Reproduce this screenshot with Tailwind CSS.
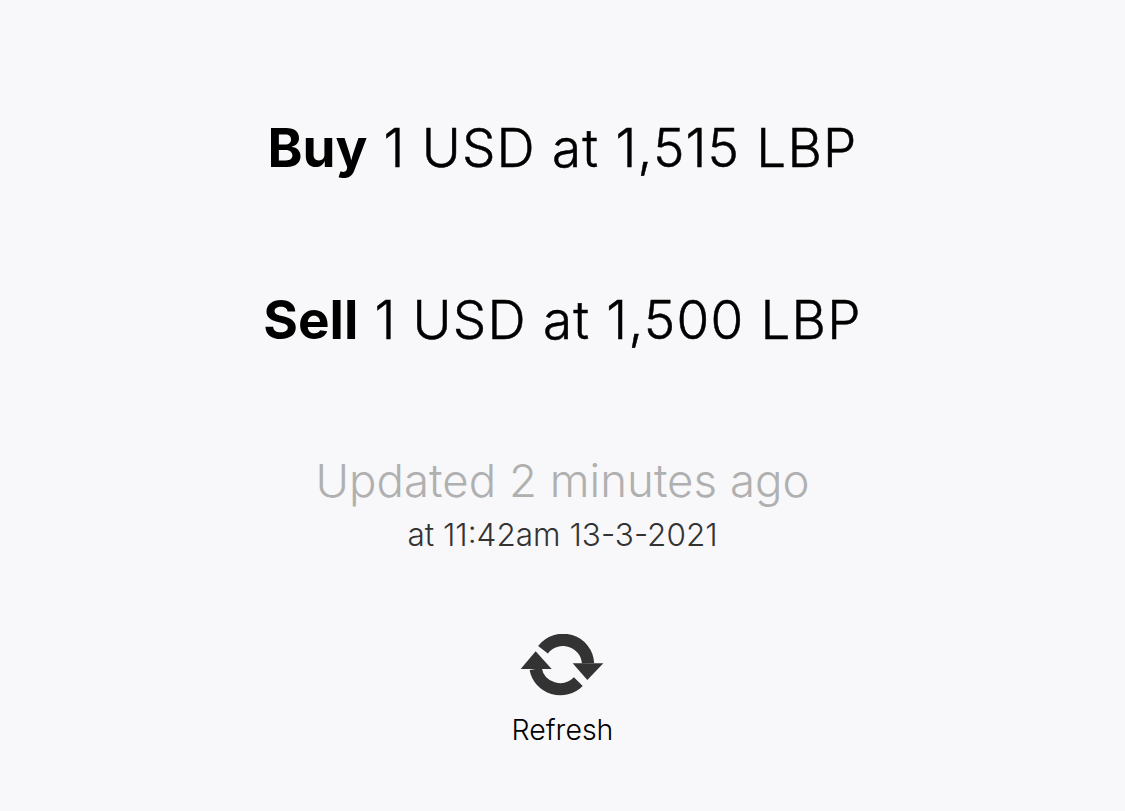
<!DOCTYPE html>
<html lang="en">
<head>
    <meta charset="UTF-8">
    <title>USD to LBP</title>
    <script src="https://cdn.jsdelivr.net/npm/@tailwindcss/browser@4"></script>
</head>
<body class="bg-[#f8f8fa] font-['Inter','Liberation_Sans',sans-serif]">
    <div class="flex flex-col items-center h-[811px] overflow-hidden pt-[118px]">
        <!-- Rates -->
        <p class="text-[53px] leading-[60px] font-light tracking-[1.2px] [-webkit-text-stroke:0.5px_black] text-black whitespace-nowrap"><b class="font-bold tracking-normal [-webkit-text-stroke:0]">Buy</b> 1 USD at 1,515 LBP</p>
        <p class="text-[53px] leading-[60px] font-light tracking-[1.2px] [-webkit-text-stroke:0.5px_black] text-black whitespace-nowrap mt-[112px]"><b class="font-bold tracking-normal [-webkit-text-stroke:0]">Sell</b> 1 USD at 1,500 LBP</p>

        <!-- Last update -->
        <p class="text-[45.6px] leading-[54px] font-light text-[#b0b0b0] whitespace-nowrap mt-[104px]">Updated 2 minutes ago</p>
        <p class="text-[31.5px] leading-[38px] font-light text-[#333] whitespace-nowrap mt-[8px]">at 11:42am 13-3-2021</p>

        <!-- Refresh button -->
        <button class="flex flex-col items-center mt-[80px]">
            <svg class="w-[84px] h-[62px]" viewBox="60 40 252 186">
                <path d="M129 87A75 73 0 0 1 264 128" fill="none" stroke="#333" stroke-width="37"/>
                <path d="M218 128H310L262 178Z" fill="#333"/>
                <path d="M107 145A75 73 0 0 0 235 183" fill="none" stroke="#333" stroke-width="37"/>
                <path d="M62 145H155L107 92Z" fill="#333"/>
            </svg>
            <span class="text-[28.5px] leading-[35px] font-light text-black mt-[16px]">Refresh</span>
        </button>
    </div>
</body>
</html>
